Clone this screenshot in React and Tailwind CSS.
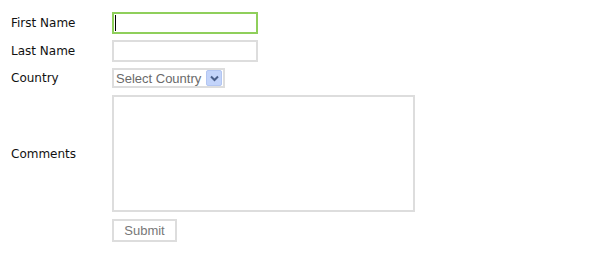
import React from "react";

const labelCls = "w-[101px] shrink-0 text-[12px] text-[#111111]";

const App = () => {
  return (
    <div
      className="w-[604px] h-[280px] bg-white pt-[12px] pl-[11px]"
      style={{ fontFamily: '"DejaVu Sans", Verdana, sans-serif' }}
    >
      <form onSubmit={(e) => e.preventDefault()}>
        <div className="flex items-center">
          <label className={labelCls}>First Name</label>
          <div className="relative">
            <input
              type="text"
              className="block w-[146px] h-[22px] border-2 border-[#8fcf5b] bg-white outline-none caret-transparent"
            />
            <span className="absolute left-[3px] top-[3px] w-px h-[16px] bg-black" />
          </div>
        </div>

        <div className="flex items-center mt-[6px]">
          <label className={labelCls}>Last Name</label>
          <input
            type="text"
            className="block w-[146px] h-[22px] border-2 border-[#dddddd] bg-white outline-none"
          />
        </div>

        <div className="flex items-center mt-[6px]">
          <label className={labelCls}>Country</label>
          <div
            className="flex items-center w-[113px] h-[20px] border-2 border-[#dddddd] bg-white pl-[2px] pr-px"
            style={{ fontFamily: '"Liberation Sans", Arial, sans-serif' }}
          >
            <span className="flex-1 text-[13px] leading-none text-[#6a6a6a] whitespace-nowrap">
              Select Country
            </span>
            <span className="flex items-center justify-center w-[16px] h-[16px] rounded-[2px] border border-[#b3c6f2] bg-[#c3d4fa]">
              <svg width="9" height="7" viewBox="0 0 9 7">
                <path d="M1 1.5 L4.5 5 L8 1.5" fill="none" stroke="#4a5f8a" strokeWidth="2" />
              </svg>
            </span>
          </div>
        </div>

        <div className="flex items-center mt-[7px]">
          <label className={labelCls}>Comments</label>
          <textarea className="block w-[303px] h-[117px] border-2 border-[#dddddd] bg-white outline-none resize-none" />
        </div>

        <div className="flex mt-[7px]">
          <div className="w-[101px] shrink-0" />
          <button
            type="submit"
            className="w-[65px] h-[23px] border-2 border-[#dddddd] bg-white text-[13px] text-[#777777]"
            style={{ fontFamily: '"Liberation Sans", Arial, sans-serif' }}
          >
            Submit
          </button>
        </div>
      </form>
    </div>
  );
};

export default App;
